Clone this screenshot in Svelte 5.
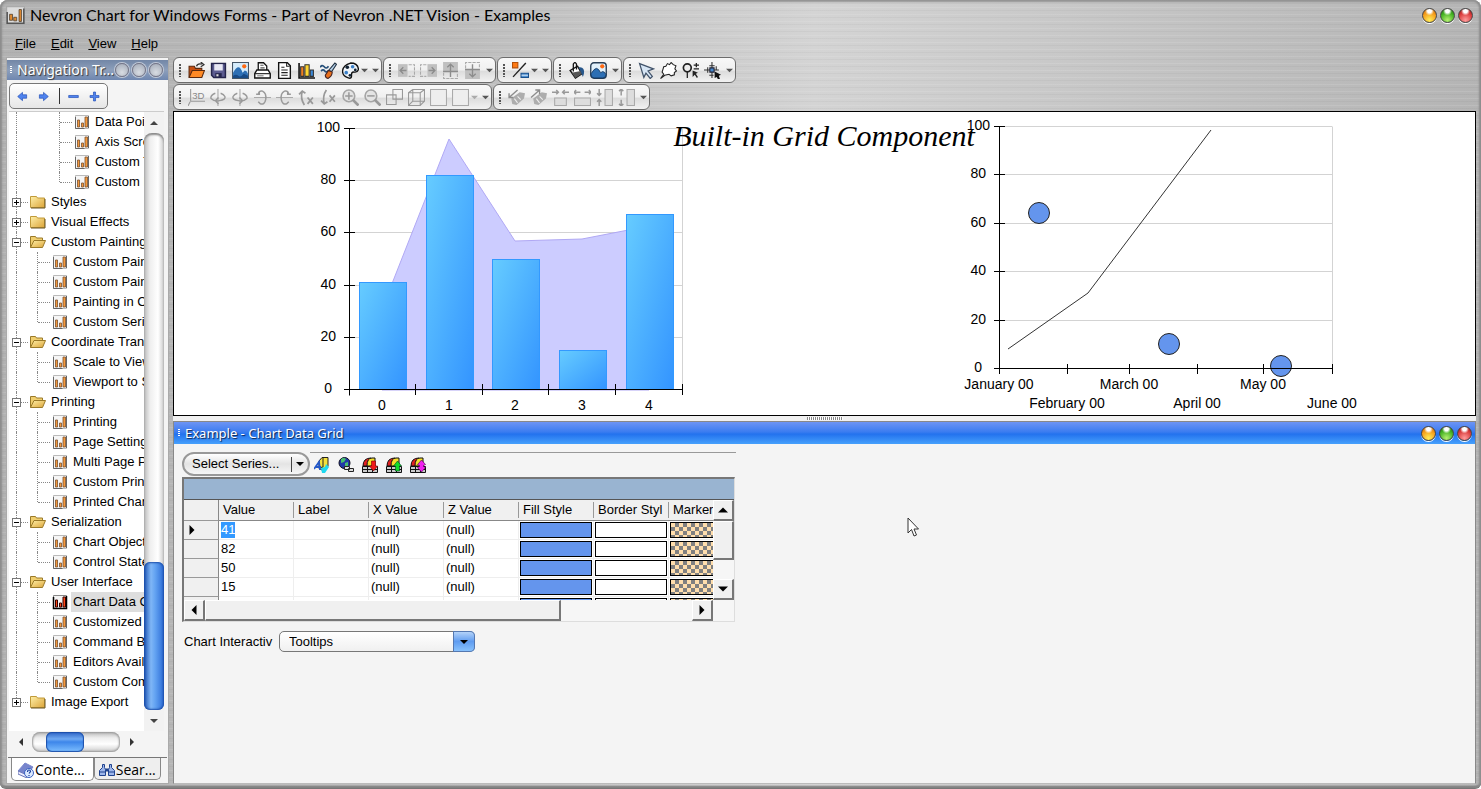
<script lang="ts">
	type Node = { text: string; level: number; open?: boolean; last?: boolean; current?: boolean };

	const nodes: Node[] = [
		{ text: 'Data Point Tooltips', level: 3 },
		{ text: 'Axis Scrolling', level: 3 },
		{ text: 'Custom Tools', level: 3 },
		{ text: 'Custom Events', level: 3, last: true },
		{ text: 'Styles', level: 1, open: false },
		{ text: 'Visual Effects', level: 1, open: false },
		{ text: 'Custom Painting', level: 1, open: true },
		{ text: 'Custom Painting', level: 2 },
		{ text: 'Custom Painting 2', level: 2 },
		{ text: 'Painting in Chart', level: 2 },
		{ text: 'Custom Series', level: 2, last: true },
		{ text: 'Coordinate Transforms', level: 1, open: true },
		{ text: 'Scale to Viewport', level: 2 },
		{ text: 'Viewport to Scale', level: 2, last: true },
		{ text: 'Printing', level: 1, open: true },
		{ text: 'Printing', level: 2 },
		{ text: 'Page Settings', level: 2 },
		{ text: 'Multi Page Printing', level: 2 },
		{ text: 'Custom Printing', level: 2 },
		{ text: 'Printed Chart', level: 2, last: true },
		{ text: 'Serialization', level: 1, open: true },
		{ text: 'Chart Objects', level: 2 },
		{ text: 'Control State', level: 2, last: true },
		{ text: 'User Interface', level: 1, open: true },
		{ text: 'Chart Data Grid', level: 2, current: true },
		{ text: 'Customized Editors', level: 2 },
		{ text: 'Command Bars', level: 2 },
		{ text: 'Editors Available', level: 2 },
		{ text: 'Custom Commands', level: 2, last: true },
		{ text: 'Image Export', level: 1, open: false, last: true }
	];

	type Bar = { icons: string[]; drop?: boolean; off?: boolean };
	const barRows: Bar[][] = [
		[
			{ icons: ['open', 'save', 'image', 'print', 'page', 'chart', 'style', 'palette'], drop: true },
			{ icons: ['dockLeft', 'dockRight', 'dockTop', 'dockBottom'], off: true },
			{ icons: ['series'], drop: true },
			{ icons: ['fill', 'image'] },
			{ icons: ['pointer', 'lasso', 'trackball', 'offset'] }
		],
		[
			{
				icons: ['view3d', 'rotateY', 'rotateY2', 'rotateX', 'rotateX2', 'turnUp', 'turnDown', 'zoomIn', 'zoomOut', 'overlap', 'cube', 'rect', 'rect'],
				drop: true,
				off: true
			},
			{ icons: ['nearer', 'farther', 'narrow', 'widen', 'shorten', 'heighten'], off: true }
		]
	];

	const values = [41, 82, 50, 15, 67];
	const area = [31, 96, 57, 58, 63];
	const ticks = [0, 20, 40, 60, 80, 100];
	const months = [
		{ text: 'January 00', x: 826 },
		{ text: 'February 00', x: 894 },
		{ text: 'March 00', x: 956 },
		{ text: 'April 00', x: 1024 },
		{ text: 'May 00', x: 1090 },
		{ text: 'June 00', x: 1159 }
	];
	const bubbles = [
		{ x: 866, v: 64 },
		{ x: 996, v: 10 },
		{ x: 1108, v: 1 }
	];
	const lights = ['amber', 'green', 'red'];
	const columns = ['Value', 'Label', 'X Value', 'Z Value', 'Fill Style', 'Border Styl', 'Marker'];

	const leftX = (i: number) => Math.floor(208.6 + i * 66.6);
	const leftY = (v: number) => Math.round(278 - v * 2.61);
	const rightY = (v: number) => Math.round(257 - v * 2.42);
	const areaPoints =
		`${leftX(0)},278 ` + area.map((v, i) => `${leftX(i)},${leftY(v)}`).join(' ') + ` ${leftX(4)},278`;

	let mode = $state('Tooltips');
</script>

<svelte:head>
	<title>Nevron Chart for Windows Forms</title>
</svelte:head>

{#snippet icon(name: string)}
	<svg class="icon" viewBox="0 0 16 16" aria-hidden="true">
		{#if name === 'open'}
			<path d="M1 14V4h5l1 2h6v3" fill="#c64f12" stroke="#5a2a10" />
			<path d="M1 14.500 4 8h11.500L13 14.500z" fill="#ff8a26" stroke="#5a2a10" />
			<path d="M8 4q1-3 5-2M12 0l3 2.500-3 2" fill="none" stroke="#333" stroke-width="1.200" />
		{:else if name === 'save'}
			<path d="M1.500 1.500h13v13h-11l-2-2z" fill="#5c5c90" stroke="#25254c" stroke-width="1.400" />
			<path d="M4 2h8v6H4z" fill="#e8e8f4" />
			<path d="M5 10.500h6v4H5z" fill="#25254c" />
			<path d="M6 11.500h2v2H6z" fill="#ddd" />
		{:else if name === 'image'}
			<path d="M.5.500h15v15H.5z" fill="#d6ecfb" stroke="#456" />
			<circle cx="11.500" cy="4" r="2" fill="#ff6a14" />
			<path d="M1 10q3-5 5-5t4 5l2-2q2 0 3 3v4H1z" fill="#2d6fb4" />
			<path d="M1 13q3-2 5 0t5-2l4 2v2H1z" fill="#174a86" />
		{:else if name === 'imageRound'}
			<rect x=".7" y=".7" width="14.600" height="14.600" rx="3" fill="#e2f1fb" stroke="#2a4058" stroke-width="1.300" />
			<circle cx="11.500" cy="4" r="2" fill="#ff6a14" />
			<path d="M1 11q3-5 5-5t4 4l2-1q2 0 3 3 0 3-3 3H4q-3 0-3-3z" fill="#2d6fb4" stroke="#12355f" stroke-width=".8" />
		{:else if name === 'print'}
			<path d="M4 8V.7h5l3 3V8" fill="#fff" stroke="#111" stroke-width="1.200" />
			<path d="M6 3h3M6 5.500h4" stroke="#555" />
			<path d="m.7 11 2-3.500h10.600l2 3.500v4H.7z" fill="#fff" stroke="#111" stroke-width="1.300" />
			<path d="M1 11h14" stroke="#111" />
			<path d="M3 13h6" stroke="#777" />
		{:else if name === 'page'}
			<path d="M2.500.5h8l3 3v12h-11z" fill="#fff" stroke="#111" stroke-width="1.300" />
			<path d="M10 1v3h3M5 5h3M5 7.500h6M5 10h6M5 12.500h6" fill="none" stroke="#222" />
		{:else if name === 'chart'}
			<path d="M1 1v14h15" fill="none" stroke="#111" stroke-width="1.500" />
			<path d="M2.500 4.500h3v9h-3z" fill="#ef7f20" stroke="#333" />
			<path d="M6.500 2.500h4v11h-4z" fill="#ffd630" stroke="#333" />
			<path d="M11.500 7.500h3v6h-3z" fill="#3a88d8" stroke="#333" />
		{:else if name === 'style'}
			<path d="M0 5q2-3 4-.5T8 4M1 8.500q2-2 3.500 0T8 8" fill="none" stroke="#27507a" stroke-width="1.600" />
			<path d="m8 8 6-7 1.500 1.200L11 9z" fill="#b8d2ea" stroke="#234" />
			<path d="m8 8 3.500 1.500q0 4-4 6-2.500-.5-2.500-3z" fill="#e8701c" stroke="#422" />
		{:else if name === 'palette'}
			<path d="M8 1q7 0 7.500 6-1 3-4 2.500T9 13q0 3-3 2Q0 13 .6 8T8 1z" fill="#eef3f8" stroke="#111" stroke-width="1.300" />
			<circle cx="5" cy="5" r="1.700" fill="#123" />
			<circle cx="10" cy="4.500" r="1.700" fill="#3a80c8" />
			<circle cx="4" cy="10" r="1.700" fill="#3a80c8" />
			<circle cx="12.500" cy="7.500" r="1.300" fill="#123" />
			<circle cx="7.500" cy="12.500" r="1.300" fill="#123" />
		{:else if name === 'dockLeft'}
			<path d="M0 2h9v12H0z" fill="#c0c0c0" />
			<path d="M10 2.500h5.500v11H10" fill="none" stroke="#aaa" stroke-dasharray="3 1" />
			<path d="M8 8H2m3-3L2 8l3 3" fill="none" stroke="#8c8c8c" stroke-width="1.300" />
		{:else if name === 'dockRight'}
			<path d="M7 2h9v12H7z" fill="#c0c0c0" />
			<path d="M6 2.500H.5v11H6" fill="none" stroke="#aaa" stroke-dasharray="3 1" />
			<path d="M8 8h6m-3-3 3 3-3 3" fill="none" stroke="#8c8c8c" stroke-width="1.300" />
		{:else if name === 'dockTop'}
			<path d="M1 0h14v9H1z" fill="#c0c0c0" />
			<path d="M1.500 10v5.500h13V10" fill="none" stroke="#aaa" stroke-dasharray="3 1" />
			<path d="M8 14V2M5 5l3-3 3 3M1 9h14" fill="none" stroke="#8c8c8c" stroke-width="1.300" />
		{:else if name === 'dockBottom'}
			<path d="M1 7h14v9H1z" fill="#c0c0c0" />
			<path d="M1.500 6V.5h13V6" fill="none" stroke="#aaa" stroke-dasharray="3 1" />
			<path d="M8 2v12m-3-3 3 3 3-3M1 7h14" fill="none" stroke="#8c8c8c" stroke-width="1.300" />
		{:else if name === 'series'}
			<path d="M.5.500h5v5h-5z" fill="#ff7a14" stroke="#b4500a" />
			<path d="M1 14 13 1" stroke="#222" stroke-width="1.300" />
			<path d="M8.500 10.500h7v4h-7z" fill="#4f92d4" stroke="#1b4f8a" />
			<path d="M9 12.500h6" stroke="#cde" />
		{:else if name === 'fill'}
			<path d="m2 8 7-4 4 7-6 4z" fill="#fff" stroke="#111" stroke-width="1.300" />
			<path d="m3.500 10 8.500-1.500 1 2.500-6 4z" fill="#555" />
			<path d="M5 9V2q1.500-3 3 0v5" fill="none" stroke="#111" stroke-width="1.200" />
			<path d="M10 5q6-1 5 6l-1 3-2-5z" fill="#26568a" />
		{:else if name === 'pointer'}
			<path d="m1.500 1.500 13 5-5 2 4 5-2 2-4-5-2 4z" fill="#d7e6f5" stroke="#41536a" stroke-width="1.200" />
		{:else if name === 'lasso'}
			<path d="m.5 15.500 3-4-1.500-2 1.500-5 2-.5L7 1.500l2 1 1.500-2 2 2 2.500 1-1 3 1.500 2-2 1.500V12l-3 1-2-1.500-4 1z" fill="#fff" stroke="#222" />
		{:else if name === 'trackball'}
			<circle cx="5" cy="5.500" r="3.700" fill="#eee" stroke="#222" stroke-width="1.600" />
			<path d="M5 9v6M11 3h5M13.500 1v4M11 6.500h5" stroke="#222" stroke-width="1.200" />
			<path d="m10 8 5 2-2 1 2 3-1 1-2-3-2 2z" fill="#222" />
		{:else if name === 'offset'}
			<path d="M0 7.500h14M7.500 0v15M3.500 5v5M11.500 4v4M5 3.500h5M5 12.500h4" stroke="#333" />
			<path d="M5.500 5.500h4v4h-4z" fill="#4487cc" stroke="#223" />
			<path d="m10 9 6 3-2 1 1 3h-2l-1-2-2 1z" fill="#111" />
		{:else if name === 'view3d'}
			<path d="M2.500 0v11.500H16M2 12l-2 4" fill="none" stroke="#999" />
			<text x="4" y="9" font-size="9" fill="#888">3D</text>
		{:else if name === 'rotateY' || name === 'rotateY2'}
			<path d="M7.500 0v16" stroke="#aaa" />
			<path d={name === 'rotateY' ? 'M5 4q-5 2-4 5 3 3 8 2 6-1 5-4-1-2-4-3M8 8l-3 3 3 3' : 'M10 4q5 2 4 5-3 3-8 2-6-1-5-4 1-2 4-3M7 8l3 3-3 3'} fill="none" stroke="#999" stroke-width="1.300" />
		{:else if name === 'rotateX' || name === 'rotateX2'}
			<path d="M0 8h16" stroke="#aaa" />
			<path d={name === 'rotateX' ? 'M4 5q1-4 4-3 4 2 3 8-1 5-5 4l-2-2M2 5l3 0 0-3' : 'M12 5q-1-4-4-3-4 2-3 8 1 5 5 4l2-2M14 5l-3 0 0-3'} fill="none" stroke="#999" stroke-width="1.400" />
		{:else if name === 'turnUp'}
			<path d="M6 15Q2 9 4 2M1 5l3-3 3 2M9 8l5 6M14 8l-5 6" fill="none" stroke="#999" stroke-width="1.600" />
		{:else if name === 'turnDown'}
			<path d="M6 1Q2 7 4 14M1 11l3 3 3-2M9 6l5 6M14 6l-5 6" fill="none" stroke="#999" stroke-width="1.600" />
		{:else if name === 'zoomIn' || name === 'zoomOut'}
			<circle cx="6.500" cy="6.500" r="5.500" fill="#e4e4e4" stroke="#a5a5a5" stroke-width="1.500" />
			<path d={name === 'zoomIn' ? 'M3 6.500h7M6.500 3v7' : 'M3 6.500h7'} stroke="#999" stroke-width="1.400" />
			<path d="m10 10 5.500 5.500" stroke="#999" stroke-width="2.500" />
		{:else if name === 'overlap'}
			<path d="M.5 5.500h9v9h-9zM6.500.5h9v9h-9z" fill="none" stroke="#999" />
		{:else if name === 'cube'}
			<path d="M.5 3.500h11v12H.5zM4.500.5h11v11h-11zM.5 3.500l4-3M11.500 3.500l4-3M11.500 15.500l4-4M.5 15.500l4-4" fill="none" stroke="#999" />
		{:else if name === 'rect'}
			<path d="M.5.500h15v15H.5z" fill="#eee" stroke="#aaa" />
		{:else if name === 'nearer' || name === 'farther'}
			<path d="m3 9 8-6 5 1-1 5-7 6-4-1z" fill="#adadad" />
			<path d={name === 'nearer' ? 'M9 1 1 8M1 4v4h4' : 'M1 8 9 1M5 1h4v4'} fill="none" stroke="#8c8c8c" stroke-width="1.300" />
			<path d="m6 9 3 4M9 7l3 3" stroke="#eee" />
		{:else if name === 'narrow'}
			<path d="M0 3h6M4 1l2 2-2 2M16 3h-6M12 1l-2 2 2 2" fill="none" stroke="#999" stroke-width="1.400" />
			<path d="M2.500 8.500h11v7h-11z" fill="#ddd" stroke="#aaa" />
		{:else if name === 'widen'}
			<path d="M0 3h6M2 1 0 3l2 2M16 3h-6M14 1l2 2-2 2" fill="none" stroke="#999" stroke-width="1.400" />
			<path d="M.5 8.500h15v7H.5z" fill="#ddd" stroke="#aaa" />
		{:else if name === 'shorten'}
			<path d="M3 0v6M1 4l2 2 2-2M3 16v-6M1 12l2-2 2 2" fill="none" stroke="#999" stroke-width="1.400" />
			<path d="M8.500.5h7v15h-7z" fill="#ddd" stroke="#aaa" />
		{:else if name === 'heighten'}
			<path d="M3 0v6M1 2l2-2 2 2M3 16v-6M1 14l2 2 2-2" fill="none" stroke="#999" stroke-width="1.400" />
			<path d="M8.500.5h7v15h-7z" fill="#ddd" stroke="#aaa" />
		{:else if name === 'leaf'}
			<path d="M1.500 1.500h13v13h-13z" fill="#f6f6f6" stroke="#bbb" />
			<path d="M1.500 3v11.500h9M14.500 14V2" fill="none" stroke="#666" />
			<path d="M3.500 6h2v7h-2zM7.500 9h2v4h-2zM11 3h2.500v10H11z" fill="#f59a3c" stroke="#7a5030" stroke-width=".8" />
		{:else if name === 'leafCurrent'}
			<path d="M1.500 1.500h13v13h-13z" fill="#f4f4f4" stroke="#888" />
			<path d="M1.500 3v11.500h13V2" fill="none" stroke="#000" stroke-width="1.500" />
			<path d="M3.500 6h2v7h-2zM7.500 9h2v4h-2zM11 3h2.500v10H11z" fill="#ff4a18" stroke="#300" />
		{:else if name === 'folder'}
			<path d="M.5 13.500v-11h6l1 1.500h7v9.500z" fill="url(#gold)" stroke="#c09a3a" />
			<path d="M1 14h14V5" fill="none" stroke="#6b5420" />
		{:else if name === 'folderOpen'}
			<path d="M.5 13.500v-11h5l1 1.500h6V7" fill="#f0cf70" stroke="#9a7a2a" />
			<path d="M.5 13.500 4 6.500h11.500l-3 7z" fill="url(#gold)" stroke="#9a7a2a" />
		{:else if name === 'book'}
			<path d="m0 9 7-8 8 4-6 8z" fill="#7684cc" stroke="#7a86cc" />
			<path d="m0 9 9 4v3l-9-4z" fill="#eef" stroke="#6a77b8" />
			<circle cx="11" cy="11" r="4.500" fill="#dce9ff" stroke="#3a62c0" />
			<path d="M9.500 10q0-2 1.500-2t1.500 1.500L11 11.500M11 13v1" fill="none" stroke="#1b3f9c" stroke-width="1.200" />
		{:else if name === 'binoculars'}
			<path d="M3.500 2.500h2v3l1 2v6h-6v-5l3-3zM10.500 2.500h2v3l3 3v5h-6v-6l1-2z" fill="#9db6ea" stroke="#1f428e" />
			<path d="M6.500 6.500h3v3h-3z" fill="#1f428e" />
			<path d="M1 10h5M10 10h5" stroke="#1f428e" />
		{:else if name === 'app'}
			<path d="M.5.500h15v15H.5z" fill="#ddd" stroke="#aaa" />
			<path d="M1 5v9.500h14V2" fill="none" stroke="#555" stroke-width="1.300" />
			<path d="M3 7h2.500v5H3zM6.500 9.500H9v3H6.500zM11 3h2v10h-2z" fill="#e08a30" stroke="#543" stroke-width=".7" />
		{:else if name === 'wizard'}
			<path d="m5 4 3-3.500h6v9l-5 4-4-2z" fill="#f4e13a" stroke="#222" />
			<path d="M9 1v9l-4 1" fill="none" stroke="#222" />
			<path d="M0 12 5 5l1 8M2 10h5" fill="none" stroke="#2458c8" stroke-width="1.800" />
			<path d="m7 11 4-1 1-3 3 3-4 6H8z" fill="#1fd8ef" />
		{:else if name === 'link'}
			<circle cx="6.500" cy="6" r="5.500" fill="#2038a8" stroke="#112" />
			<path d="M3 2q3-2 5 0L6 5 3 6zM7 6l3-1v4l-3 1z" fill="#48c070" />
			<path d="M6.500 9.500h5v3h-5zM10.500 11.500h5v3h-5z" fill="#ddd" stroke="#222" />
		{:else if name === 'importData' || name === 'exportData' || name === 'syncData'}
			<path d="M.5 9.500h15v6H.5z" fill="#ccc" stroke="#111" />
			<path d="M0 12.500h16M5.500 10v6M10.500 10v6" stroke="#111" />
			<path d="M1 9q0-8 8-8v8z" fill="#e02020" stroke="#111" />
			<path d="M5 9q0-8 5-8h3v8z" fill="#f6e02c" stroke="#111" />
			{#if name === 'importData'}
				<path d="M9.500 4h4v5h2l-4 5-4-5h2z" fill="#f01818" stroke="#700" stroke-width=".6" />
			{:else if name === 'exportData'}
				<path d="M9.500 14h4V9h2l-4-5-4 5h2z" fill="#14dc28" stroke="#042" stroke-width=".6" />
			{:else}
				<path d="m11.500 3 4 4.500-2 1v1l2 1-4 4.500-4-4.500 2-1v-1l-2-1z" fill="#f020f0" stroke="#404" stroke-width=".6" />
			{/if}
		{:else if name === 'prev'}
			<path d="m1 8 7-6v3.500h6v5H8V14z" fill="#4f83ee" stroke="#2450b8" />
		{:else if name === 'next'}
			<path d="m15 8-7-6v3.500H2v5h6V14z" fill="#4f83ee" stroke="#2450b8" />
		{:else if name === 'minus'}
			<path d="M1 6.500h14v3H1z" fill="#4f83ee" stroke="#2450b8" />
		{:else if name === 'plus'}
			<path d="M6.500 1.500h3v5h5v3h-5v5h-3v-5h-5v-3h5z" fill="#4f83ee" stroke="#2450b8" />
		{/if}
	</svg>
{/snippet}

{#snippet arrow(dir: string)}
	<svg class="arrow {dir}" viewBox="0 0 8 8" aria-hidden="true"><path d="M0 2h8L4 6z" fill="currentColor" /></svg>
{/snippet}

{#snippet lamps()}
	<div class="lamps">
		{#each lights as light}
			<button class="lamp {light}" aria-label={light}></button>
		{/each}
	</div>
{/snippet}

<svg class="defs" aria-hidden="true">
	<defs>
		<linearGradient id="gold" x1="0" y1="0" x2="1" y2="1">
			<stop offset="0" stop-color="#fff0a8" />
			<stop offset="1" stop-color="#dca53a" />
		</linearGradient>
		<linearGradient id="bar" x1="0" y1="0" x2="1" y2="1">
			<stop offset="0" stop-color="#66ccff" />
			<stop offset="1" stop-color="#3394ff" />
		</linearGradient>
	</defs>
</svg>

<div class="window">
	<header class="title">
		<span class="app">{@render icon('app')}</span>
		<h1>Nevron Chart for Windows Forms - Part of Nevron .NET Vision - Examples</h1>
		{@render lamps()}
	</header>
	<nav class="menu">
		<button><u>F</u>ile</button>
		<button><u>E</u>dit</button>
		<button><u>V</u>iew</button>
		<button><u>H</u>elp</button>
	</nav>

	<div class="body">
		<aside>
			<div class="side-head">
				<i class="grip light"></i>
				<h2>Navigation Tr...</h2>
				<button class="knob" aria-label="Options"></button>
				<button class="knob" aria-label="Pin"></button>
				<button class="knob" aria-label="Close"></button>
			</div>
			<div class="side-tools">
				<button aria-label="Back">{@render icon('prev')}</button>
				<button aria-label="Forward">{@render icon('next')}</button>
				<i></i>
				<button aria-label="Collapse">{@render icon('minus')}</button>
				<button aria-label="Expand">{@render icon('plus')}</button>
			</div>
			<div class="tree-box">
				<ul class="tree">
					{#each nodes as node}
						<li>
							<span class="root" class:end={node.level === 1 && node.last} class:hook={node.level === 1}>
								{#if node.level === 1}
									<button class="expander" class:closed={!node.open} aria-label="Toggle {node.text}"></button>
								{/if}
							</span>
							{#if node.level === 3}<span class="gap"></span>{/if}
							{#if node.level > 1}<span class="branch" class:end={node.last}></span>{/if}
							{@render icon(node.level === 1 ? (node.open ? 'folderOpen' : 'folder') : node.current ? 'leafCurrent' : 'leaf')}
							<button class="label" class:current={node.current}>{node.text}</button>
						</li>
					{/each}
				</ul>
				<div class="vscroll">
					<button aria-label="Scroll up">{@render arrow('up')}</button>
					<div class="vtrack"><div class="vthumb"></div></div>
					<button aria-label="Scroll down">{@render arrow('down')}</button>
				</div>
			</div>
			<div class="hscroll">
				<button aria-label="Scroll left">{@render arrow('left')}</button>
				<div class="htrack"><div class="hthumb"></div></div>
				<button aria-label="Scroll right">{@render arrow('right')}</button>
			</div>
			<div class="tabs">
				<button class="active">{@render icon('book')}Conte...</button>
				<button>{@render icon('binoculars')}Sear...</button>
			</div>
		</aside>

		<main>
			{#each barRows as row}
				<div class="bars">
					{#each row as bar}
						<div class="bar" class:off={bar.off}>
							<i class="grip"></i>
							{#each bar.icons as name}
								<button aria-label={name}>{@render icon(name === 'image' && bar.icons.length === 2 ? 'imageRound' : name)}</button>
							{/each}
							{#if bar.drop}<button class="drop" aria-label="Choose">{@render arrow('down')}</button>{/if}
							<button class="more" aria-label="More">{@render arrow('down')}</button>
						</div>
					{/each}
				</div>
			{/each}

			<section class="chart">
				<svg viewBox="0 0 1301 303">
					<g stroke="#d3d3d3">
						{#each ticks.slice(1) as t}
							<path d="M176 {leftY(t) - 0.5}H508.500M826 {rightY(t) - 0.5}H1158.500" />
						{/each}
						<path d="M508.500 17v261M1158.500 15v242" />
					</g>
					<polygon points={areaPoints} fill="#ccccff" stroke="#b0a8f4" />
					{#each values as v, i}
						<rect x={leftX(i) - 22.5} y={leftY(v) - 0.5} width="47" height={278 - leftY(v)} fill="url(#bar)" stroke="#3399ff" />
					{/each}
					{#each bubbles as b}
						<circle cx={b.x - 1} cy={rightY(b.v) - 1} r="10.500" fill="#6495ed" stroke="#222" />
					{/each}
					<path d="M834 237 914 181 1037 18" fill="none" stroke="#333" />
					<g stroke="#000">
						<path d="M175.500 16.500v267M170 277.500h338.500M825.500 14.500v247M820 256.500h338.500" />
						{#each ticks as t}
							<path d="M170 {leftY(t) - 0.5}h11M820 {rightY(t) - 0.5}h11" />
						{/each}
						{#each [1, 2, 3, 4, 5] as n}
							<path d="M{Math.round(174.600 + n * 66.600) + 0.5} 272v11" />
						{/each}
						{#each months as m}
							<path d="M{m.x - 0.5} 252v10" />
						{/each}
					</g>
					<g class="axis">
						{#each ticks as t}
							<text x={t === 100 ? 166 : t === 0 ? 158 : 162} y={leftY(t) + 3} text-anchor="end">{t}</text>
							<text x={t === 100 ? 816 : t === 0 ? 808 : 812} y={rightY(t) + 3} text-anchor="end">{t}</text>
						{/each}
						{#each values as _, i}
							<text x={leftX(i)} y="298" text-anchor="middle">{i}</text>
						{/each}
						{#each months as m, i}
							<text x={m.x - 1} y={i % 2 ? 296 : 277} text-anchor="middle">{m.text}</text>
						{/each}
					</g>
					<text class="heading" x="650" y="34" text-anchor="middle">Built-in Grid Component</text>
				</svg>
			</section>
			<div class="splitter"><i></i></div>

			<section class="panel">
				<div class="panel-head">
					<i class="grip light"></i>
					<h2>Example - Chart Data Grid</h2>
					{@render lamps()}
				</div>
				<div class="panel-body">
					<div class="grid-tools">
						<button class="series">Select Series...<i></i>{@render arrow('down')}</button>
						<div class="grid-icons">
							{#each ['wizard', 'link', 'importData', 'exportData', 'syncData'] as name}
								<button aria-label={name}>{@render icon(name)}</button>
							{/each}
						</div>
					</div>
					<div class="grid">
						<div class="caption"></div>
						<div class="grid-main">
							<div class="clip">
								<table>
									<thead>
										<tr>
											<th class="row-head"></th>
											{#each columns as col}<th><span>{col}</span></th>{/each}
										</tr>
									</thead>
									<tbody>
										{#each values as v, i}
											<tr>
												<td class="row-head">{#if i === 0}{@render arrow('right')}{/if}</td>
												<td>{#if i === 0}<mark>{v}</mark>{:else}{v}{/if}</td>
												<td></td>
												<td>(null)</td>
												<td>(null)</td>
												<td class="swatch"><div class="blue"></div></td>
												<td class="swatch"><div></div></td>
												<td class="swatch"><div class="check"></div></td>
											</tr>
										{/each}
									</tbody>
								</table>
							</div>
							<div class="old-v">
								<button aria-label="Rows up">{@render arrow('up')}</button>
								<div class="old-thumb"></div>
								<button aria-label="Rows down">{@render arrow('down')}</button>
							</div>
						</div>
						<div class="old-h">
							<button aria-label="Columns left">{@render arrow('left')}</button>
							<div class="old-thumb"></div>
							<button aria-label="Columns right">{@render arrow('right')}</button>
						</div>
					</div>
					<div class="field">
						<label for="mode">Chart Interactiv</label>
						<div class="select">
							<select id="mode" bind:value={mode}>
								<option>Tooltips</option>
								<option>None</option>
							</select>
							<span>{@render arrow('down')}</span>
						</div>
					</div>
				</div>
			</section>
		</main>
	</div>

	<svg class="cursor" viewBox="0 0 12 20" aria-hidden="true">
		<path d="M1 1v15l3.500-3.500L7 19l2.500-1L7 12h4.500z" fill="#fff" stroke="#333" />
	</svg>
</div>

<style>
	:global(body) {
		margin: 0;
		background: #fff;
		font: 13px/16px 'Liberation Sans', Arial, sans-serif;
		color: #000;
	}
	.defs {
		position: absolute;
		width: 0;
		height: 0;
	}
	button {
		margin: 0;
		padding: 0;
		border: 0;
		background: none;
		font: inherit;
		color: inherit;
	}
	h1,
	h2 {
		margin: 0;
		font-weight: 400;
		white-space: nowrap;
	}
	.window {
		box-sizing: border-box;
		min-height: 100vh;
		display: flex;
		flex-direction: column;
		padding: 0 5px 4px 6px;
		border-radius: 8px 8px 6px 6px;
		border-bottom: 1px solid #777;
		box-shadow: inset 2px 0 2px #8e8e8e, inset -2px 0 2px #8e8e8e, inset 0 2px 2px #999, inset 0 -2px 2px #777;
		background:
			repeating-linear-gradient(rgba(255, 255, 255, 0.1) 0 1px, transparent 1px 3px, rgba(0, 0, 0, 0.03) 3px 4px, transparent 4px 7px),
			linear-gradient(90deg, #b2b2b2, #bcbcbc 30%, #d4d4d4 55%, #c6c6c6 75%, #b4b4b4);
	}
	.icon {
		display: block;
		flex: none;
		width: 16px;
		height: 16px;
	}
	.arrow {
		display: block;
		flex: none;
		width: 8px;
		height: 8px;
	}
	.arrow.up {
		transform: rotate(180deg);
	}
	.arrow.left {
		transform: rotate(90deg);
	}
	.arrow.right {
		transform: rotate(-90deg);
	}
	.title {
		display: flex;
		align-items: center;
		height: 30px;
	}
	.title h1 {
		flex: 1;
		font: 16px/20px 'Trebuchet MS', Lato, sans-serif;
	}
	.app {
		margin-right: 5px;
	}
	.app .icon {
		width: 19px;
		height: 19px;
	}
	.lamps {
		display: flex;
		gap: 3px;
		padding-right: 3px;
	}
	.lamp {
		width: 15px;
		height: 15px;
		border: 1px solid #444;
		border-radius: 50%;
		box-shadow: 0 1px 0 #fff;
	}
	.amber {
		background: radial-gradient(circle at 50% 15%, #fff 0 15%, transparent 35%), radial-gradient(circle at 50% 85%, #ffee58, #f49a1a 60%, #b85c00);
	}
	.green {
		background: radial-gradient(circle at 50% 15%, #fff 0 15%, transparent 35%), radial-gradient(circle at 50% 85%, #b4f070, #3fae20 60%, #1c5c0c);
	}
	.red {
		background: radial-gradient(circle at 50% 15%, #fff 0 15%, transparent 35%), radial-gradient(circle at 50% 85%, #ff9c9c, #d83838 60%, #7c1010);
	}
	.menu {
		display: flex;
		gap: 15px;
		height: 27px;
		padding-left: 9px;
	}
	.body {
		flex: 1;
		display: flex;
		gap: 4px;
	}

	aside {
		flex: none;
		box-sizing: border-box;
		width: 163px;
		display: flex;
		flex-direction: column;
		border: 1px solid #aaa;
		background: #f4f4f4;
	}
	.side-head {
		display: flex;
		align-items: center;
		height: 20px;
		margin-top: 2px;
		padding: 0 5px 0 3px;
		background: linear-gradient(#7286a6, #8d9fbb 50%, #6f87b0);
		color: #fff;
	}
	.side-head h2 {
		flex: 1;
		min-width: 0;
		font: 14px/20px 'Noto Sans', sans-serif;
		text-shadow: 1px 1px 1px #333;
	}
	.grip {
		flex: none;
		width: 2px;
		height: 13px;
		margin: 0 4px 0 5px;
		background: repeating-linear-gradient(#555 0 2px, transparent 2px 3px);
	}
	.grip.light {
		height: 8px;
		margin: 0 5px 0 0;
		background: repeating-linear-gradient(#fff 0 1px, transparent 1px 2px);
	}
	.knob {
		width: 14px;
		height: 14px;
		margin-left: 3px;
		border: 1px solid #778;
		border-radius: 50%;
		background: radial-gradient(circle at 50% 70%, #d8dce2, #a0a8b6);
		box-shadow: 0 0 0 1px #c0c8d6;
	}
	.side-tools {
		display: flex;
		align-items: center;
		align-self: flex-start;
		gap: 10px;
		height: 24px;
		margin: 3px 0 2px 2px;
		padding: 0 7px;
		border: 1px solid #777;
		border-radius: 5px;
		background: linear-gradient(#fff, #e6e6e6);
	}
	.side-tools .icon {
		width: 11px;
		height: 11px;
	}
	.side-tools i {
		width: 1px;
		height: 16px;
		margin-right: -2px;
		background: #333;
	}
	.tree-box {
		flex: 1 1 0;
		display: flex;
		margin: 0 4px 0 2px;
		border-top: 1px solid #ccc;
	}
	.tree {
		flex: 1;
		margin: 0;
		padding: 0;
		overflow: hidden;
		background: #fff;
		list-style: none;
	}
	.tree li {
		display: flex;
		align-items: center;
		height: 20px;
	}
	.root,
	.branch,
	.gap {
		flex: none;
		position: relative;
		width: 21px;
		height: 20px;
	}
	.branch,
	.gap {
		width: 22px;
	}
	.root::before,
	.branch::before {
		content: '';
		position: absolute;
		left: 7px;
		top: 0;
		bottom: 0;
		border-left: 1px dotted #888;
	}
	.end::before {
		bottom: 10px;
	}
	.hook::after,
	.branch::after {
		content: '';
		position: absolute;
		left: 8px;
		right: 2px;
		top: 10px;
		border-top: 1px dotted #888;
	}
	.expander {
		position: absolute;
		z-index: 1;
		left: 3px;
		top: 6px;
		width: 9px;
		height: 9px;
		border: 1px solid #777;
		background: linear-gradient(#000, #000) center / 5px 1px no-repeat #fff;
	}
	.expander.closed {
		background:
			linear-gradient(#000, #000) center / 5px 1px no-repeat,
			linear-gradient(#000, #000) center / 1px 5px no-repeat #fff;
	}
	.label {
		margin-left: 3px;
		padding: 0 2px;
		line-height: 20px;
		white-space: nowrap;
	}
	.current {
		background: #dedede;
	}
	.vscroll {
		flex: none;
		display: flex;
		flex-direction: column;
		width: 20px;
		background: #f2f2f2;
		color: #444;
	}
	.vscroll button,
	.hscroll button {
		display: grid;
		place-items: center;
		width: 23px;
		height: 21px;
	}
	.vscroll button {
		width: 20px;
	}
	.vtrack {
		flex: 1;
		display: flex;
		flex-direction: column;
		justify-content: flex-end;
		border-radius: 8px;
		background: linear-gradient(90deg, #bbb, #eee 30%, #fff 70%, #ccc);
		box-shadow: inset 0 2px 2px #888;
	}
	.vthumb {
		height: 148px;
		border-radius: 6px;
		background: linear-gradient(90deg, #1e55b4, #7fb6f6 35%, #64a4f2 55%, #2c6cd6);
		box-shadow: inset 0 0 2px 1px #1c4ea8;
	}
	.hscroll {
		display: flex;
		align-items: center;
		width: 134px;
		margin-left: 2px;
		background: #f4f4f4;
		color: #333;
	}
	.htrack {
		flex: 1;
		height: 20px;
		padding-left: 14px;
		border-radius: 8px;
		background: linear-gradient(#bbb, #eee 30%, #fff 60%, #ccc);
		box-shadow: inset 0 0 2px 1px #999;
	}
	.hthumb {
		width: 38px;
		height: 20px;
		border-radius: 6px;
		background: linear-gradient(#2c62c4, #6fa9f2 35%, #3d86ea 50%, #7fc0ff);
		box-shadow: inset 0 0 1px 1px #1c4ea8;
	}
	.tabs {
		display: flex;
		align-items: flex-start;
		height: 25px;
		margin: 5px 1px 0;
		padding-left: 3px;
		border-top: 1px solid #777;
		font: 14px/18px 'Open Sans', sans-serif;
	}
	.tabs button {
		display: flex;
		align-items: center;
		gap: 1px;
		height: 22px;
		padding: 2px 4px 0;
		border: 1px solid #888;
		border-top: 0;
		border-radius: 0 0 5px 5px;
		background: #eee;
	}
	.tabs .active {
		height: 23px;
		padding: 2px 8px 0 6px;
		background: #fff;
	}

	main {
		flex: 1;
		min-width: 0;
		display: flex;
		flex-direction: column;
	}
	.bars {
		display: flex;
		gap: 1px;
		margin-bottom: 1px;
	}
	.bar {
		box-sizing: border-box;
		display: flex;
		align-items: center;
		height: 26px;
		border: 1px solid #6c6c6c;
		border-radius: 6px;
		background: linear-gradient(#f8f8f8, #f0f0f0 50%, #dcdcdc 55%, #f2f2f2);
		color: #555;
	}
	.bar button {
		display: grid;
		place-items: center;
		width: 22px;
		height: 22px;
	}
	.bar .icon {
		width: 17px;
		height: 17px;
	}
	.bar .drop {
		width: 8px;
	}
	.bar .more {
		width: 12px;
	}
	.bar .arrow {
		width: 7px;
		height: 7px;
	}
	.bar .drop .arrow {
		margin-right: 4px;
	}
	.off .drop {
		color: #aaa;
	}
	.chart {
		border: 1px solid #000;
		background: #fff;
	}
	.chart svg {
		display: block;
		width: 100%;
	}
	.axis {
		font-size: 14px;
	}
	.heading {
		font: italic 30px 'Liberation Serif', 'Times New Roman', serif;
	}
	.splitter {
		display: grid;
		place-items: center;
		height: 5px;
		background: #f0f0f0;
	}
	.splitter i {
		width: 36px;
		height: 3px;
		background: repeating-linear-gradient(90deg, #888 0 1px, #fff 1px 2px);
	}
	.panel {
		flex: 1;
		border: 1px solid #888;
		border-bottom-color: #bbb;
		background: #f4f4f4;
	}
	.panel-head {
		display: flex;
		align-items: center;
		height: 22px;
		padding-left: 4px;
		background: linear-gradient(#6d94f4, #3b7cf0 45%, #2372ee 55%, #46a0fc);
		color: #fff;
	}
	.panel-head h2 {
		flex: 1;
		font: 13px/20px 'Noto Sans', sans-serif;
		text-shadow: 1px 1px 1px #124;
	}
	.panel-body {
		padding: 8px;
	}
	.grid-tools {
		display: flex;
		width: 554px;
		margin-bottom: 1px;
	}
	.series {
		display: flex;
		align-items: center;
		width: 128px;
		height: 24px;
		box-sizing: border-box;
		padding: 0 4px 0 8px;
		border: 2px solid #999;
		border-radius: 12px;
		background: linear-gradient(#fff, #e4e4e4 50%, #f6f6f6);
		white-space: nowrap;
	}
	.series i {
		width: 1px;
		height: 15px;
		margin: 0 4px 0 auto;
		background: #444;
	}
	.grid-icons {
		flex: 1;
		display: flex;
		align-items: center;
		gap: 8px;
		padding-left: 4px;
		border-top: 1px solid #999;
	}
	.grid {
		width: 550px;
		border: 1px solid #ddd;
		border-top: 2px solid #777;
		border-left: 2px solid #777;
	}
	.caption {
		height: 20px;
		border-bottom: 1px solid #555;
		background: #99b4d1;
	}
	.grid-main {
		display: flex;
		height: 100px;
	}
	.grid .arrow {
		width: 10px;
		height: 10px;
	}
	.clip {
		flex: 1;
		overflow: hidden;
	}
	table {
		table-layout: fixed;
		width: 560px;
		border-collapse: separate;
		border-spacing: 0;
		background: #fff;
	}
	th,
	td {
		box-sizing: border-box;
		width: 75px;
		height: 19px;
		padding: 0 2px;
		border-right: 1px solid #eee;
		border-bottom: 1px solid #eee;
		line-height: 16px;
		text-align: left;
		font-weight: 400;
	}
	th {
		height: 21px;
		padding: 0;
		border-right: 0;
		border-bottom: 1px solid #888;
		background: #f0f0f0;
		white-space: nowrap;
	}
	th span {
		display: block;
		padding-left: 4px;
		border-right: 1px solid #999;
	}
	.row-head {
		width: 35px;
		padding-left: 3px;
		border-right: 1px solid #888;
		border-bottom: 1px solid #999;
		background: #f0f0f0;
	}
	mark {
		display: inline-block;
		background: #3399ff;
		color: #fff;
	}
	td.swatch {
		padding: 0 1px;
	}
	.swatch div {
		height: 14px;
		border: 1px solid #000;
	}
	.swatch .blue {
		background: #6495ed;
	}
	.swatch .check {
		background: conic-gradient(#808080 25%, #ffdead 0 50%, #808080 0 75%, #ffdead 0) 0 0 / 8px 8px;
	}
	.old-v,
	.old-h {
		display: flex;
		background: #f6f6f6;
	}
	.old-v {
		flex-direction: column;
		justify-content: space-between;
		width: 21px;
	}
	.old-v button,
	.old-h button,
	.old-thumb {
		box-sizing: border-box;
		display: grid;
		place-items: center;
		height: 21px;
		border: 1px solid #fff;
		border-right: 2px solid #777;
		border-bottom: 2px solid #777;
		background: #f0f0f0;
	}
	.old-h button {
		width: 21px;
	}
	.old-v .old-thumb {
		height: 39px;
		margin-bottom: auto;
	}
	.old-h {
		padding-right: 21px;
	}
	.old-h .old-thumb {
		width: 356px;
		margin-right: auto;
	}
	.field {
		display: flex;
		align-items: center;
		gap: 6px;
		margin-top: 9px;
		padding-left: 2px;
	}
	.field label {
		width: 89px;
		overflow: hidden;
		white-space: nowrap;
	}
	.select {
		position: relative;
		width: 196px;
	}
	.select select {
		display: block;
		box-sizing: border-box;
		width: 100%;
		height: 21px;
		padding: 0 9px;
		appearance: none;
		border: 1px solid #777;
		border-radius: 5px;
		background: linear-gradient(#fff, #f0f0f0);
		font: inherit;
	}
	.select span {
		position: absolute;
		top: 0;
		right: 0;
		display: grid;
		place-items: center;
		width: 22px;
		height: 21px;
		border-radius: 0 5px 5px 0;
		background: linear-gradient(#bcd8fa, #5f9cf0 50%, #8cc6ff);
		box-shadow: inset 0 0 0 1px #5578b0;
		pointer-events: none;
	}
	.cursor {
		position: absolute;
		left: 907px;
		top: 517px;
		width: 12px;
		height: 20px;
	}
</style>
